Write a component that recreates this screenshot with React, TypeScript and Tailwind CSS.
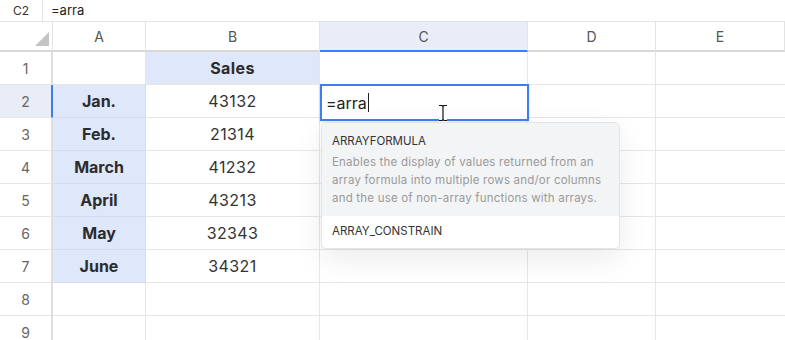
import React from "react";

const cols = [
  { name: "A", w: "w-[93px]" },
  { name: "B", w: "w-[174px]" },
  { name: "C", w: "w-[208px]" },
  { name: "D", w: "w-[128px]" },
  { name: "E", w: "w-[129px]" },
];

const rows: [string, string][] = [
  ["", "Sales"],
  ["Jan.", "43132"],
  ["Feb.", "21314"],
  ["March", "41232"],
  ["April", "43213"],
  ["May", "32343"],
  ["June", "34321"],
  ["", ""],
  ["", ""],
];

const App = () => {
  return (
    <div className="relative w-[785px] h-[340px] overflow-hidden bg-white font-['Inter',sans-serif] text-[#333]">
      {/* formula bar */}
      <div className="flex h-[22px] border-b border-[#e3e3e3]">
        <div className="w-[43px] border-r border-[#e3e3e3] flex items-center justify-center text-[12px] text-[#333]">
          C2
        </div>
        <div className="flex items-center pl-[8px] text-[13px] text-[#222]">=arra</div>
      </div>

      {/* column headers */}
      <div className="flex h-[30px]">
        <div className="w-[53px] shrink-0 border-r border-[#e3e3e3] border-b-2 border-b-[#d8d8d8] relative">
          <div className="absolute left-[35px] top-[10px] w-0 h-0 border-l-[14px] border-l-transparent border-b-[14px] border-b-[#c4c4c4]" />
        </div>
        {cols.map((c) => (
          <div
            key={c.name}
            className={`${c.w} shrink-0 border-r border-[#e3e3e3] flex items-center justify-center text-[14px] text-[#555] ${
              c.name === "C" ? "bg-[#e9edf7] border-b-2 border-b-[#3d7ef5]" : "border-b-2 border-b-[#d8d8d8]"
            }`}
          >
            {c.name}
          </div>
        ))}
      </div>

      {/* rows */}
      {rows.map(([a, b], i) => {
        const n = i + 1;
        const selRow = n === 2;
        return (
          <div key={n} className="flex h-[33px]">
            <div
              className={`w-[53px] shrink-0 border-b border-[#e6e6e6] border-r-2 flex items-center justify-center text-[14px] text-[#666] ${
                selRow ? "bg-[#e9edf7] border-r-[#3d7ef5]" : "border-r-[#dedede]"
              }`}
            >
              {n}
            </div>
            <div
              className={`w-[93px] shrink-0 border-r border-b flex items-center justify-center text-[16px] font-bold text-[#2c2c2c] ${
                a ? "bg-[#dfe7fb] border-[#d3dcf0]" : "border-[#e6e6e6]"
              }`}
            >
              {a}
            </div>
            <div
              className={`w-[174px] shrink-0 border-r border-b border-[#e6e6e6] flex items-center justify-center text-[16px] tracking-[0.4px] ${
                n === 1 ? "bg-[#dfe7fb] font-bold text-[#2c2c2c]" : "text-[#333]"
              }`}
            >
              {b}
            </div>
            <div className="w-[208px] shrink-0 border-r border-b border-[#e6e6e6]" />
            <div className="w-[128px] shrink-0 border-r border-b border-[#e6e6e6]" />
            <div className="w-[129px] shrink-0 border-b border-[#e6e6e6]" />
          </div>
        );
      })}

      {/* cell editor */}
      <div className="absolute left-[320px] top-[84px] w-[209px] h-[37px] border-2 border-[#3d7ef5] bg-white shadow-[0_1px_3px_rgba(0,0,0,0.12)] flex items-center pl-[4px] text-[16px] text-[#222]">
        =arra
        <span className="inline-block w-px h-[19px] bg-[#222] ml-[1px]" />
      </div>

      {/* mouse I-beam */}
      <svg className="absolute left-[438px] top-[104px]" width="10" height="18" viewBox="0 0 10 18">
        <path d="M1 1.5h3l1 1 1-1h3M5 2.5v13M1 16.5h3l1-1 1 1h3" stroke="#fff" strokeWidth="3" fill="none" />
        <path d="M1 1.5h3l1 1 1-1h3M5 2.5v13M1 16.5h3l1-1 1 1h3" stroke="#111" strokeWidth="1.2" fill="none" />
      </svg>

      {/* autocomplete dropdown */}
      <div className="absolute left-[321px] top-[122px] w-[299px] rounded-[5px] border border-[#e4e4e4] bg-white shadow-[0_10px_30px_rgba(0,0,0,0.08)] overflow-hidden">
        <div className="bg-[#f3f4f6] px-[10px] pt-[9px] pb-[9px]">
          <div className="text-[11.5px] text-[#333] leading-[18px]">ARRAYFORMULA</div>
          <div className="mt-[3px] text-[11.5px] leading-[18px] text-[#9a9a9a] tracking-[0.2px] whitespace-nowrap">
            Enables the display of values returned from an
            <br />
            array formula into multiple rows and/or columns
            <br />
            and the use of non-array functions with arrays.
          </div>
        </div>
        <div className="h-[32px] flex items-center px-[10px] text-[11.5px] text-[#333]">ARRAY_CONSTRAIN</div>
      </div>
    </div>
  );
};

export default App;
